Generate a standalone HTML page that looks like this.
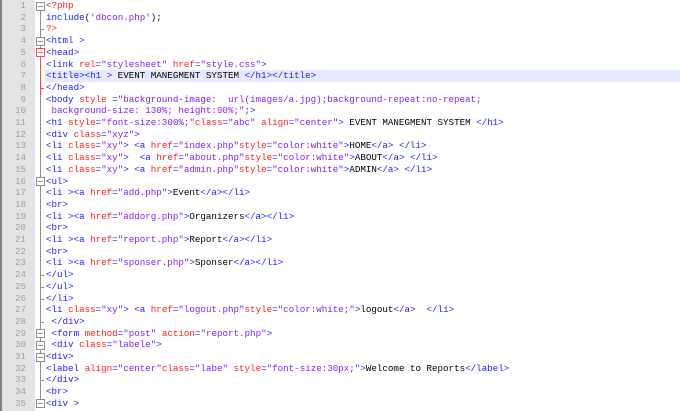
<!DOCTYPE html>
<html><head><meta charset="utf-8"><style>
body{margin:0;width:680px;height:411px;overflow:hidden;background:#fff;font-family:"Liberation Mono","Courier New",monospace;font-size:9.2px;}
#g{position:absolute;left:0;top:0;width:2px;height:411px;background:#808080}
#n{position:absolute;left:2px;top:0;width:33px;height:411px;background:#e4e4e4}
#f{position:absolute;left:35px;top:0;width:10px;height:411px;background:#fff}
.l{position:absolute;left:46px;height:11.7px;line-height:11.7px;white-space:pre;color:#000}
.ln{position:absolute;left:2px;width:24px;text-align:right;height:11.7px;line-height:11.7px;color:#a0a0a0;font-size:9.2px}
.hl{position:absolute;left:45px;width:635px;height:11.7px;background:#e8e8ff}
.t{color:#2020ff}.a{color:#ff2020}.v{color:#8020ff}.p{color:#ff2020}.o{color:#000080}
.vl{position:absolute;left:40px;width:1px;background:#909090}
.bx{position:absolute;left:36px;width:9px;height:9px;border:1px solid #909090;background:#fff;box-sizing:border-box}
.bx:after{content:"";position:absolute;left:1px;top:3px;width:5px;height:1px;background:#909090}
.end{position:absolute;left:40px;width:4px;height:1px;background:#909090}
</style></head><body>
<div id="g"></div><div id="n"></div><div id="f"></div>
<div class="hl" style="top:70.2px"></div>
<div id="lines"></div>
<script>
var L=[
'<span class="p">&lt;?php</span>',
'<span class="t">include</span><span class="o">(</span><span class="v">\'dbcon.php\'</span><span class="o">);</span>',
'<span class="p">?&gt;</span>',
'<span class="t">&lt;html &gt;</span>',
'<span class="t">&lt;head&gt;</span>',
'<span class="t">&lt;link </span><span class="a">rel</span><span class="t">=</span><span class="v">"stylesheet"</span> <span class="a">href</span><span class="t">=</span><span class="v">"style.css"</span><span class="t">&gt;</span>',
'<span class="t">&lt;title&gt;&lt;h1 &gt;</span> EVENT MANEGMENT SYSTEM <span class="t">&lt;/h1&gt;&lt;/title&gt;</span>',
'<span class="t">&lt;/head&gt;</span>',
'<span class="t">&lt;body </span><span class="a">style</span> <span class="t">=</span><span class="v">"background-image:  url(images/a.jpg);background-repeat:no-repeat;</span>',
'<span class="v"> background-size: 130%; height:90%;"</span><span class="t">;&gt;</span>',
'<span class="t">&lt;h1 </span><span class="a">style</span><span class="t">=</span><span class="v">"font-size:300%;"</span><span class="a">class</span><span class="t">=</span><span class="v">"abc"</span> <span class="a">align</span><span class="t">=</span><span class="v">"center"</span><span class="t">&gt;</span> EVENT MANEGMENT SYSTEM <span class="t">&lt;/h1&gt;</span>',
'<span class="t">&lt;div </span><span class="a">class</span><span class="t">=</span><span class="v">"xyz"</span><span class="t">&gt;</span>',
'<span class="t">&lt;li </span><span class="a">class</span><span class="t">=</span><span class="v">"xy"</span><span class="t">&gt; &lt;a </span><span class="a">href</span><span class="t">=</span><span class="v">"index.php"</span><span class="a">style</span><span class="t">=</span><span class="v">"color:white"</span><span class="t">&gt;</span>HOME<span class="t">&lt;/a&gt; &lt;/li&gt;</span>',
'<span class="t">&lt;li </span><span class="a">class</span><span class="t">=</span><span class="v">"xy"</span><span class="t">&gt;  &lt;a </span><span class="a">href</span><span class="t">=</span><span class="v">"about.php"</span><span class="a">style</span><span class="t">=</span><span class="v">"color:white"</span><span class="t">&gt;</span>ABOUT<span class="t">&lt;/a&gt; &lt;/li&gt;</span>',
'<span class="t">&lt;li </span><span class="a">class</span><span class="t">=</span><span class="v">"xy"</span><span class="t">&gt; &lt;a </span><span class="a">href</span><span class="t">=</span><span class="v">"admin.php"</span><span class="a">style</span><span class="t">=</span><span class="v">"color:white"</span><span class="t">&gt;</span>ADMIN<span class="t">&lt;/a&gt; &lt;/li&gt;</span>',
'<span class="t">&lt;ul&gt;</span>',
'<span class="t">&lt;li &gt;&lt;a </span><span class="a">href</span><span class="t">=</span><span class="v">"add.php"</span><span class="t">&gt;</span>Event<span class="t">&lt;/a&gt;&lt;/li&gt;</span>',
'<span class="t">&lt;br&gt;</span>',
'<span class="t">&lt;li &gt;&lt;a </span><span class="a">href</span><span class="t">=</span><span class="v">"addorg.php"</span><span class="t">&gt;</span>Organizers<span class="t">&lt;/a&gt;&lt;/li&gt;</span>',
'<span class="t">&lt;br&gt;</span>',
'<span class="t">&lt;li &gt;&lt;a </span><span class="a">href</span><span class="t">=</span><span class="v">"report.php"</span><span class="t">&gt;</span>Report<span class="t">&lt;/a&gt;&lt;/li&gt;</span>',
'<span class="t">&lt;br&gt;</span>',
'<span class="t">&lt;li &gt;&lt;a </span><span class="a">href</span><span class="t">=</span><span class="v">"sponser.php"</span><span class="t">&gt;</span>Sponser<span class="t">&lt;/a&gt;&lt;/li&gt;</span>',
'<span class="t">&lt;/ul&gt;</span>',
'<span class="t">&lt;/ul&gt;</span>',
'<span class="t">&lt;/li&gt;</span>',
'<span class="t">&lt;li </span><span class="a">class</span><span class="t">=</span><span class="v">"xy"</span><span class="t">&gt; &lt;a </span><span class="a">href</span><span class="t">=</span><span class="v">"logout.php"</span><span class="a">style</span><span class="t">=</span><span class="v">"color:white;"</span><span class="t">&gt;</span>logout<span class="t">&lt;/a&gt;  &lt;/li&gt;</span>',
' <span class="t">&lt;/div&gt;</span>',
' <span class="t">&lt;form </span><span class="a">method</span><span class="t">=</span><span class="v">"post"</span> <span class="a">action</span><span class="t">=</span><span class="v">"report.php"</span><span class="t">&gt;</span>',
' <span class="t">&lt;div </span><span class="a">class</span><span class="t">=</span><span class="v">"labele"</span><span class="t">&gt;</span>',
'<span class="t">&lt;div&gt;</span>',
'<span class="t">&lt;label </span><span class="a">align</span><span class="t">=</span><span class="v">"center"</span><span class="a">class</span><span class="t">=</span><span class="v">"labe"</span> <span class="a">style</span><span class="t">=</span><span class="v">"font-size:30px;"</span><span class="t">&gt;</span>Welcome to Reports<span class="t">&lt;/label&gt;</span>',
'<span class="t">&lt;/div&gt;</span>',
'<span class="t">&lt;br&gt;</span>',
'<span class="t">&lt;div &gt;</span>'];
var h='',H=11.7;
var boxes=[1,4,5,16,29,30,31,35],ends=[3,8,24,25,26,28,33];
h+='<div class="vl" style="top:8px;height:396px"></div>';
h+='<div class="vl" style="top:60px;height:35px;background:#f44"></div>';
for(var i=0;i<L.length;i++){var y=i*H;
h+='<div class="ln" style="top:'+y+'px">'+(i+1)+'</div>';
h+='<div class="l" style="top:'+y+'px">'+L[i]+'</div>';
if(boxes.indexOf(i+1)>=0)h+='<div class="bx" style="top:'+(y+1.5)+'px;'+(i==4?'border-color:#f44':'')+'"></div>';
if(ends.indexOf(i+1)>=0)h+='<div class="end" style="top:'+(y+6)+'px;'+(i==7?'background:#f44':'')+'"></div>';}
document.getElementById('lines').innerHTML=h;
</script>
</body></html>
